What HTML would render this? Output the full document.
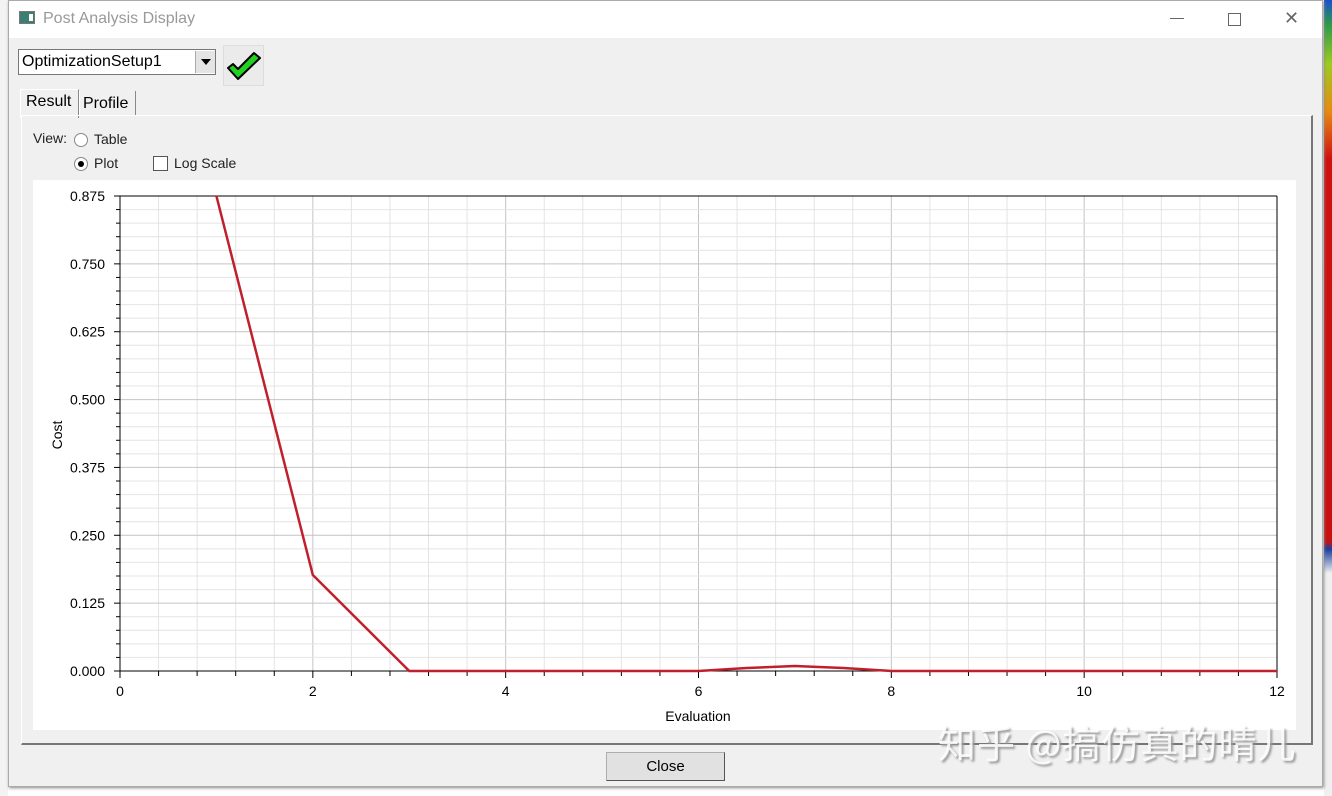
<!DOCTYPE html>
<html><head><meta charset="utf-8"><style>
body{margin:0;width:1332px;height:796px;position:relative;overflow:hidden;background:#fff;font-family:"Liberation Sans","Noto Sans CJK SC",sans-serif}
.a{position:absolute}
</style></head><body>
<div class="a" style="left:0;top:0;width:8px;height:796px;background:#f3f3f3"></div>
<div class="a" style="left:1324px;top:0;width:8px;height:796px;background:linear-gradient(#1a4fd0 0,#2a9a4a 3%,#9ccc20 8%,#e88a10 14%,#d01010 20%,#c81010 68%,#1a3fa0 69%,#f0f0f0 72%)"></div>
<div class="a" style="left:8px;top:0;width:1315px;height:787px;background:#f0f0f0;box-shadow:1px 1px 3px #888;border:1px solid #aaa;box-sizing:border-box"></div>
<div class="a" style="left:9px;top:1px;width:1313px;height:37px;background:#fff"></div>
<div class="a" style="left:19px;top:11px;width:16px;height:13px;background:#3c7e72;border:1px solid #777;box-sizing:border-box"><div style="margin:2px 0 0 9px;width:4px;height:7px;background:#fff"></div></div>
<div class="a" style="left:43px;top:10px;font-size:16px;color:#999">Post Analysis Display</div>
<div class="a" style="left:1170px;top:18px;width:14px;height:1px;background:#666"></div>
<div class="a" style="left:1228px;top:13px;width:11px;height:11px;border:1px solid #666"></div>
<div class="a" style="left:1284px;top:9px;font-size:18px;color:#666;line-height:18px">✕</div>
<div class="a" style="left:18px;top:49px;width:198px;height:26px;background:#fff;border:1px solid #777;box-sizing:border-box"></div>
<div class="a" style="left:22px;top:53px;font-size:16px;color:#000">OptimizationSetup1</div>
<div class="a" style="left:195px;top:51px;width:19px;height:22px;background:#e4e4e4;border-left:1px solid #aaa"><div style="margin:8px auto;width:0;height:0;border:5px solid transparent;border-top:6px solid #000;border-bottom:0"></div></div>
<div class="a" style="left:223px;top:45px;width:41px;height:41px;background:#ebebeb;border:1px solid #ddd;box-sizing:border-box"></div>
<svg class="a" style="left:226px;top:50px" width="36" height="32"><path d="M2 18 L7 14 L12 19 L28 3 L34 8 L12 29 Z" fill="#22d022" stroke="#000" stroke-width="2" stroke-linejoin="round"/></svg>
<div class="a" style="left:20px;top:89px;width:57px;height:28px;background:#f0f0f0;border:1px solid #fff;border-right:1px solid #888;border-bottom:none"></div>
<div class="a" style="left:26px;top:93px;font-size:16px">Result</div>
<div class="a" style="left:79px;top:91px;width:55px;height:25px;border-left:1px solid #fff;border-right:1px solid #888"></div>
<div class="a" style="left:83px;top:95px;font-size:16px">Profile</div>
<div class="a" style="left:21px;top:115px;width:1292px;height:630px;border-top:1px solid #fff;border-left:1px solid #fff;border-right:2px solid #777;border-bottom:2px solid #777;box-sizing:border-box"></div>
<div class="a" style="left:33px;top:130px;font-size:14px;color:#222">View:</div>
<div class="a" style="left:74px;top:133px;width:12px;height:12px;border-radius:50%;border:1px solid #888;background:#fff"></div>
<div class="a" style="left:94px;top:131px;font-size:14px;color:#222">Table</div>
<div class="a" style="left:74px;top:157px;width:12px;height:12px;border-radius:50%;border:1px solid #888;background:#fff"><div style="margin:3px;width:6px;height:6px;border-radius:50%;background:#000"></div></div>
<div class="a" style="left:94px;top:155px;font-size:14px;color:#222">Plot</div>
<div class="a" style="left:153px;top:156px;width:13px;height:13px;border:1px solid #555;background:#fff"></div>
<div class="a" style="left:174px;top:155px;font-size:14px;color:#222">Log Scale</div>
<div class="a" style="left:33px;top:180px;width:1263px;height:550px;background:#fff"></div>
<svg class="a" id="pl" style="left:0;top:0" width="1332" height="796" font-family="Liberation Sans, sans-serif" font-size="14"></svg>
<div class="a" style="left:606px;top:752px;width:119px;height:29px;background:#e1e1e1;border:1px solid #adadad;border-right-color:#555;border-bottom-color:#555;box-sizing:border-box;text-align:center;font-size:15px;line-height:28px">Close</div>
<div class="a" style="left:938px;top:714px;font-size:38px;letter-spacing:1px;white-space:nowrap;color:rgba(255,255,255,0.85);text-shadow:2px 2px 2px #999;font-family:'Noto Sans CJK SC',sans-serif">知乎 @搞仿真的晴儿</div>
<script>
var s='',X0=120,X1=1277,Y0=671,Y1=196,dx=(X1-X0)/30,dy=(Y0-Y1)/35;
for(var i=1;i<30;i++){var x=X0+i*dx;s+='<line x1="'+x+'" y1="'+Y1+'" x2="'+x+'" y2="'+Y0+'" stroke="'+(i%5?'#e4e4e4':'#c4c4c4')+'"/>';}
for(var j=1;j<35;j++){var y=Y0-j*dy;s+='<line x1="'+X0+'" y1="'+y+'" x2="'+X1+'" y2="'+y+'" stroke="'+(j%5?'#e4e4e4':'#c4c4c4')+'"/>';}
for(var i=0;i<=30;i++){var x=X0+i*dx;s+='<line x1="'+x+'" y1="'+Y0+'" x2="'+x+'" y2="'+(Y0+(i%5?5:7))+'" stroke="#000"/>';if(i%5==0)s+='<text x="'+x+'" y="'+(Y0+25)+'" text-anchor="middle">'+(i/2.5)+'</text>';}
for(var j=0;j<=35;j++){var y=Y0-j*dy;s+='<line x1="'+(X0-(j%5?4:6))+'" y1="'+y+'" x2="'+X0+'" y2="'+y+'" stroke="#000"/>';if(j%5==0)s+='<text x="'+(X0-15)+'" y="'+(y+5)+'" text-anchor="end">'+(j*0.025).toFixed(3)+'</text>';}
s+='<line x1="'+X0+'" y1="'+Y1+'" x2="'+X0+'" y2="'+Y0+'" stroke="#000"/><line x1="'+X0+'" y1="'+Y1+'" x2="'+X1+'" y2="'+Y1+'" stroke="#000"/><line x1="'+X1+'" y1="'+Y1+'" x2="'+X1+'" y2="'+Y0+'" stroke="#000"/><line x1="'+X0+'" y1="'+Y0+'" x2="'+X1+'" y2="'+Y0+'" stroke="#000"/>';
function px(v){return X0+v*96.42}
s+='<polyline fill="none" stroke="#c0202c" stroke-width="2.5" points="'+px(1)+',196 '+px(2)+',575 '+px(3)+',671 '+px(6)+',671 '+px(6.5)+',668 '+px(7)+',666 '+px(7.5)+',668 '+px(8)+',671 '+X1+',671"/>';
s+='<text x="698" y="721" text-anchor="middle">Evaluation</text><text transform="translate(62,435) rotate(-90)" text-anchor="middle">Cost</text>';
document.getElementById('pl').innerHTML=s;
</script>
</body></html>
